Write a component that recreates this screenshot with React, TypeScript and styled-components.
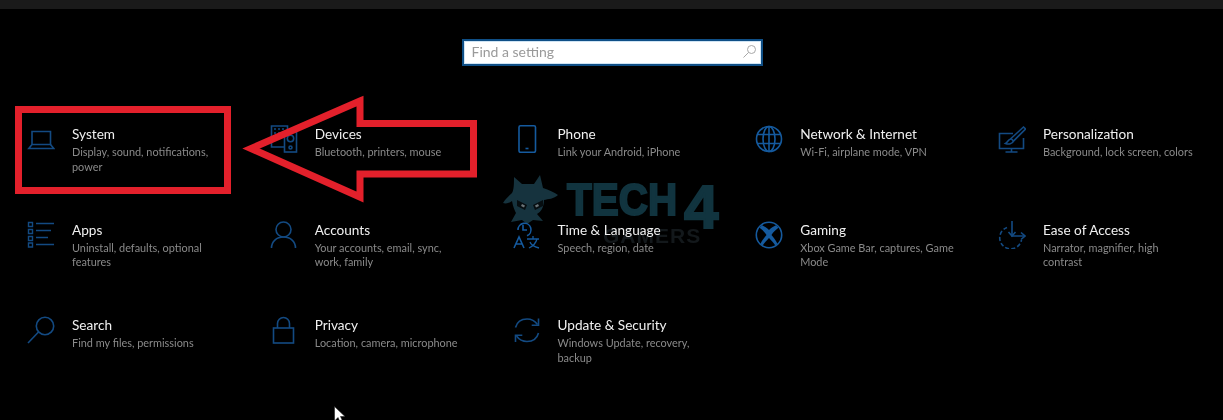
import React, { ReactNode } from "react";
import styled, { createGlobalStyle } from "styled-components";

const GlobalStyle = createGlobalStyle`
    html, body {
        margin: 0;
        background: #000;
    }
`;

const Page = styled.div`
    position: relative;
    width: 1223px;
    height: 420px;
    overflow: hidden;
    background: #000;
    font-family: "Lato", "Open Sans", sans-serif;
    filter: blur(0.35px);
`;

const TopBar = styled.div`
    height: 9px;
    background: #1a1a1a;
`;

const SearchRow = styled.div`
    display: flex;
    justify-content: center;
    padding: 30px 0 0 1px;
`;

const SearchBox = styled.div`
    box-sizing: border-box;
    width: 301px;
    height: 27px;
    padding: 0 4px 2px 8px;
    display: flex;
    align-items: center;
    justify-content: space-between;
    background: #fff;
    border: 2px solid #0f4f86;
    box-shadow: inset 0 0 0 1px #cfe4f4;
    color: #9a9a9a;
    font-size: 14px;
`;

const Grid = styled.div`
    position: relative;
    display: grid;
    grid-template-columns: repeat(5, 242.75px);
    grid-auto-rows: 95.5px;
    padding: 59px 0 0 27px;
`;

const Tile = styled.div`
    display: flex;
    align-items: flex-start;
`;

const IconSlot = styled.div<{ $dim?: boolean }>`
    flex: 0 0 45px;
    height: 28px;
    color: ${(props) => (props.$dim ? "#134a82" : "#155a9e")};

    svg {
        display: block;
    }
`;

const TileText = styled.div`
    width: 170px;
`;

const TileTitle = styled.div`
    color: #f0f0f0;
    font-size: 13.6px;
    line-height: 19px;
`;

const TileDesc = styled.div`
    margin-top: 1px;
    color: #8a8a8a;
    font-size: 10.9px;
    line-height: 14.5px;
    white-space: pre-line;
`;

const Watermark = styled.div`
    position: absolute;
    left: 505px;
    top: 172px;
    width: 225px;
    height: 78px;
`;

const WatermarkTech = styled.span`
    position: absolute;
    left: 62px;
    top: 3px;
    color: #11343f;
    font-family: "Liberation Sans", sans-serif;
    font-size: 44px;
    line-height: 50px;
    font-weight: 700;
    -webkit-text-stroke: 2px #11343f;
    transform: scaleX(0.92);
    transform-origin: left center;
`;

const WatermarkFour = styled.span`
    position: absolute;
    left: 179px;
    top: 5px;
    color: #11343f;
    font-family: "Liberation Sans", sans-serif;
    font-size: 62px;
    line-height: 60px;
    font-weight: 700;
    -webkit-text-stroke: 2px #11343f;
`;

const WatermarkGamers = styled.span`
    position: absolute;
    left: 98px;
    top: 51px;
    color: #13181b;
    font-family: "Liberation Sans", sans-serif;
    font-size: 21px;
    line-height: 26px;
    font-weight: 700;
    letter-spacing: 1px;
`;

const Mascot = styled.svg`
    position: absolute;
    left: -3px;
    top: 3px;
`;

const RedFrame = styled.div`
    position: absolute;
    left: 15px;
    top: 106px;
    box-sizing: border-box;
    width: 216px;
    height: 88px;
    border: 7.5px solid #e3202b;
`;

const Overlay = styled.svg`
    position: absolute;
    left: 0;
    top: 0;
`;

const Icon = ({ children, size = 28 }: { children: ReactNode; size?: number }) => (
    <svg width={size} height={size} viewBox="0 0 28 28" fill="none" stroke="currentColor" strokeWidth={1.6}>
        {children}
    </svg>
);

const icons: Record<string, ReactNode> = {
    laptop: (
        <Icon>
            <path d="M5 6.500h18.500v13H5z" />
            <path d="M5 19.500L1.800 23.500h25L23.500 19.500" />
        </Icon>
    ),
    devices: (
        <Icon>
            <path d="M14 22H1.500V1h16v5" />
            <path d="M4 4h2M8 4h2M12 4h2M4 8h2M8 8h2M4 12h2M8 12h2" />
            <rect x="14.500" y="7" width="12" height="20" />
            <circle cx="20.500" cy="13.500" r="3.200" />
            <circle cx="20.500" cy="22.500" r="1.500" />
        </Icon>
    ),
    phone: (
        <Icon>
            <rect x="6" y="0.800" width="16.500" height="26.500" rx="1.500" />
            <path d="M12.500 23.500h3" />
        </Icon>
    ),
    globe: (
        <Icon>
            <circle cx="14" cy="14" r="12.500" />
            <ellipse cx="14" cy="14" rx="6" ry="12.500" />
            <path d="M14 1.500v25M2.500 9.500h23M2.500 18.500h23" />
        </Icon>
    ),
    brush: (
        <Icon>
            <path d="M15 8.500H1.500v15h24V13" />
            <path d="M13.500 23v3.500M7.500 27h12" />
            <path d="M25.500 2L13 13.500l2.500 2.500L27.500 4z" />
            <path d="M13 14c-3 .5-3 3-5.500 4.500 3 1 7 .5 8-2.500" />
        </Icon>
    ),
    apps: (
        <Icon>
            <path d="M1.500 1.500h4v4h-4zM1.500 8.500h4v4h-4zM1.500 15.500h4v4h-4zM1.500 22h4v4h-4z" strokeWidth={1.4} />
            <path d="M9 2.500h18M9 9.500h15M9 16.500h12M9 23.500h18" />
        </Icon>
    ),
    person: (
        <Icon>
            <circle cx="13.500" cy="8.500" r="7.500" />
            <path d="M1.500 27c0-6.500 5-11 12-11s12 4.500 12 11" />
        </Icon>
    ),
    time: (
        <Icon>
            <path d="M5 9a6.500 6.500 0 1 1 9 5.800" />
            <path d="M10 4v5h4" />
            <path d="M1 27l5-11 5 11M3 23h6" />
            <path d="M14 18h12M20 15v3M16 27c4-2 7-5 8-9M17 21c1 3 5 5 9 6" strokeWidth={1.3} />
        </Icon>
    ),
    xbox: (
        <Icon>
            <circle cx="14" cy="14" r="12.700" />
            <path
                d="M7 4.200C9.500 5.200 12 7 14 9c2-2 4.500-3.800 7-4.800l2.500 2.600c-3 2.200-5.500 4.700-7 7.200 2.500 3 4.800 6 6 9l-2 1.800c-2-3-4.500-5.800-6.500-7.800-2 2-4.500 4.800-6.500 7.800l-2-1.800c1.200-3 3.500-6 6-9-1.500-2.500-4-5-7-7.200z"
                fill="currentColor"
                stroke="none"
            />
        </Icon>
    ),
    ease: (
        <Icon>
            <path d="M9 6.500A11 11 0 1 0 23.500 19" strokeDasharray="4 2.200" />
            <path d="M14 0v15h12" />
            <path d="M23 11.500L27 15l-4 3.500" />
            <path d="M10.500 11L14 15l3.500-4" />
        </Icon>
    ),
    search: (
        <Icon>
            <circle cx="18" cy="10" r="8.700" />
            <path d="M11.500 16L1 27" />
        </Icon>
    ),
    lock: (
        <Icon>
            <rect x="3.500" y="12" width="20" height="15" />
            <path d="M7.500 12V7.500a6 6 0 0 1 12 0V12" />
        </Icon>
    ),
    update: (
        <Icon>
            <path d="M2.500 11.500C4 6 8.500 3 14 3c4.500 0 8 2 10.500 5.500" />
            <path d="M25.500 2.500v6.800h-6.800" />
            <path d="M25.500 17c-1.500 5.500-6 8.500-11.500 8.500-4.500 0-8-2-10.500-5.500" />
            <path d="M2.500 26v-6.800h6.800" />
        </Icon>
    ),
};

const tiles = [
    { icon: "laptop", dim: true, title: "System", desc: "Display, sound, notifications,\npower" },
    { icon: "devices", dim: true, title: "Devices", desc: "Bluetooth, printers, mouse" },
    { icon: "phone", title: "Phone", desc: "Link your Android, iPhone" },
    { icon: "globe", title: "Network & Internet", desc: "Wi-Fi, airplane mode, VPN" },
    { icon: "brush", dim: true, title: "Personalization", desc: "Background, lock screen, colors" },
    { icon: "apps", dim: true, title: "Apps", desc: "Uninstall, defaults, optional\nfeatures" },
    { icon: "person", dim: true, title: "Accounts", desc: "Your accounts, email, sync,\nwork, family" },
    { icon: "time", title: "Time & Language", desc: "Speech, region, date" },
    { icon: "xbox", title: "Gaming", desc: "Xbox Game Bar, captures, Game\nMode" },
    { icon: "ease", dim: true, title: "Ease of Access", desc: "Narrator, magnifier, high\ncontrast" },
    { icon: "search", dim: true, title: "Search", desc: "Find my files, permissions" },
    { icon: "lock", dim: true, title: "Privacy", desc: "Location, camera, microphone" },
    { icon: "update", dim: true, title: "Update & Security", desc: "Windows Update, recovery,\nbackup" },
];

export default function App() {
    return (
        <Page>
            <GlobalStyle />
            <TopBar />
            <SearchRow>
                <SearchBox>
                    Find a setting
                    <svg width="15" height="15" viewBox="0 0 15 15" fill="none" stroke="#a8a8a8" strokeWidth={1}>
                        <circle cx="9.500" cy="5.500" r="4" />
                        <path d="M6.500 8.500L1.500 13.500" />
                    </svg>
                </SearchBox>
            </SearchRow>

            <Watermark>
                <Mascot width="58" height="54" viewBox="0 0 58 54">
                    <path
                        d="M12 2l8 7h12l6-9 3 13c6 2 11 4 15 7-4 4-10 4-14 5 0 7-3 12-7 14l6 7-10-1-6 4-5-4-11 2 5-9C13 36 11 32 10 26c-3 2-6 3-9 2 2-4 6-7 9-10 2-3 2-10 2-16z"
                        fill="#16333e"
                    />
                    <path d="M15 25l10 5-2 5-8-4zM41 25l-10 5 2 5 8-4z" fill="#060d10" />
                    <path d="M20 29l3 1.500-1 2-3-1.500zM36 29l-3 1.500 1 2 3-1.500z" fill="#6b7478" />
                </Mascot>
                <WatermarkTech>TECH</WatermarkTech>
                <WatermarkFour>4</WatermarkFour>
                <WatermarkGamers>GAMERS</WatermarkGamers>
            </Watermark>

            <Grid>
                {tiles.map((tile) => (
                    <Tile key={tile.title}>
                        <IconSlot $dim={tile.dim}>{icons[tile.icon]}</IconSlot>
                        <TileText>
                            <TileTitle>{tile.title}</TileTitle>
                            <TileDesc>{tile.desc}</TileDesc>
                        </TileText>
                    </Tile>
                ))}
            </Grid>

            <RedFrame />
            <Overlay width="1223" height="420" viewBox="0 0 1223 420">
                <path
                    d="M360 101L251 148.500L360 197V174H473.500V123.500H360Z"
                    fill="none"
                    stroke="#e3202b"
                    strokeWidth={7}
                    strokeMiterlimit={4}
                />
                <path d="M334.500 406.500V421L338 417.500L340.500 423L343 422L340.500 416.500H345Z" fill="#fff" stroke="#222" strokeWidth={0.6} />
            </Overlay>
        </Page>
    );
}
